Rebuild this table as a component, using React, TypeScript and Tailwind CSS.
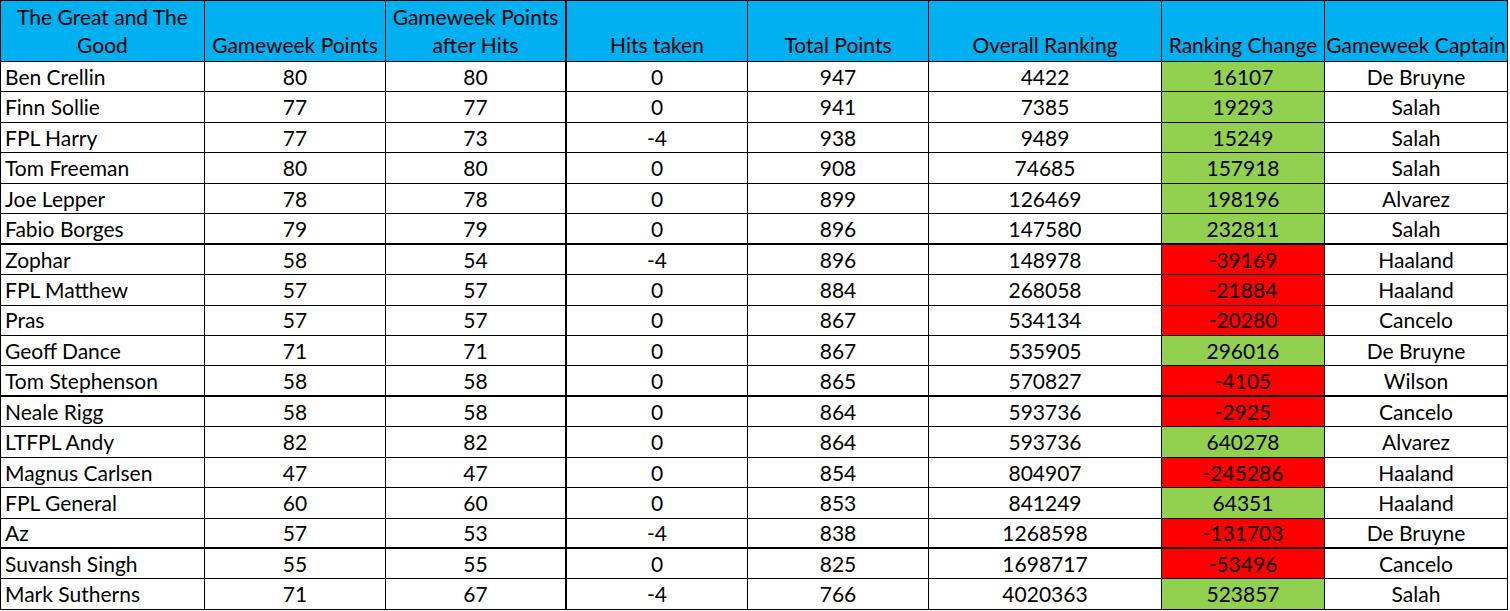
const rows: [string, number, number, number, number, number, number, string][] = [
  ["Ben Crellin", 80, 80, 0, 947, 4422, 16107, "De Bruyne"],
  ["Finn Sollie", 77, 77, 0, 941, 7385, 19293, "Salah"],
  ["FPL Harry", 77, 73, -4, 938, 9489, 15249, "Salah"],
  ["Tom Freeman", 80, 80, 0, 908, 74685, 157918, "Salah"],
  ["Joe Lepper", 78, 78, 0, 899, 126469, 198196, "Alvarez"],
  ["Fabio Borges", 79, 79, 0, 896, 147580, 232811, "Salah"],
  ["Zophar", 58, 54, -4, 896, 148978, -39169, "Haaland"],
  ["FPL Matthew", 57, 57, 0, 884, 268058, -21884, "Haaland"],
  ["Pras", 57, 57, 0, 867, 534134, -20280, "Cancelo"],
  ["Geoff Dance", 71, 71, 0, 867, 535905, 296016, "De Bruyne"],
  ["Tom Stephenson", 58, 58, 0, 865, 570827, -4105, "Wilson"],
  ["Neale Rigg", 58, 58, 0, 864, 593736, -2925, "Cancelo"],
  ["LTFPL Andy", 82, 82, 0, 864, 593736, 640278, "Alvarez"],
  ["Magnus Carlsen", 47, 47, 0, 854, 804907, -245286, "Haaland"],
  ["FPL General", 60, 60, 0, 853, 841249, 64351, "Haaland"],
  ["Az", 57, 53, -4, 838, 1268598, -131703, "De Bruyne"],
  ["Suvansh Singh", 55, 55, 0, 825, 1698717, -53496, "Cancelo"],
  ["Mark Sutherns", 71, 67, -4, 766, 4020363, 523857, "Salah"],
];

// rows after which Excel shows a thick rule
const thick = [5, 10, 15];

const headers = [
  "The Great and The Good",
  "Gameweek Points",
  "Gameweek Points after Hits",
  "Hits taken",
  "Total Points",
  "Overall Ranking",
  "Ranking Change",
  "Gameweek Captain",
];

export default function App() {
  return (
    <div className="h-[611px] w-[1510px] bg-white font-['Lato',sans-serif] text-[21px] text-black">
      <div className="grid grid-cols-[204px_181px_181px_181px_181px_233px_163px_183px] grid-rows-[61px_repeat(18,30.44px)] border-l border-t border-black w-max">
        {headers.map((h, i) => (
          <div
            key={h}
            className={`flex items-end justify-center bg-[#00b0f0] border-b border-black text-center leading-[28px] ${
              i === 2 ? "border-r-2" : "border-r"
            } ${i === 0 ? "px-1" : i === 7 ? "whitespace-nowrap" : "px-0"}`}
          >
            <span className="pb-[2px]">{h}</span>
          </div>
        ))}
        {rows.map((r, ri) =>
          r.map((v, ci) => {
            const change = ci === 6;
            const bg = change ? ((v as number) < 0 ? "bg-[#ff0000]" : "bg-[#92d050]") : "bg-white";
            return (
              <div
                key={`${ri}-${ci}`}
                className={`flex items-center border-black whitespace-nowrap ${bg} ${
                  thick.includes(ri) ? "border-b-2" : "border-b"
                } ${ci === 2 ? "border-r-2" : "border-r"} ${
                  ci === 0 ? "justify-start pl-[4px]" : "justify-center"
                }`}
              >
                {v}
              </div>
            );
          })
        )}
      </div>
    </div>
  );
}
